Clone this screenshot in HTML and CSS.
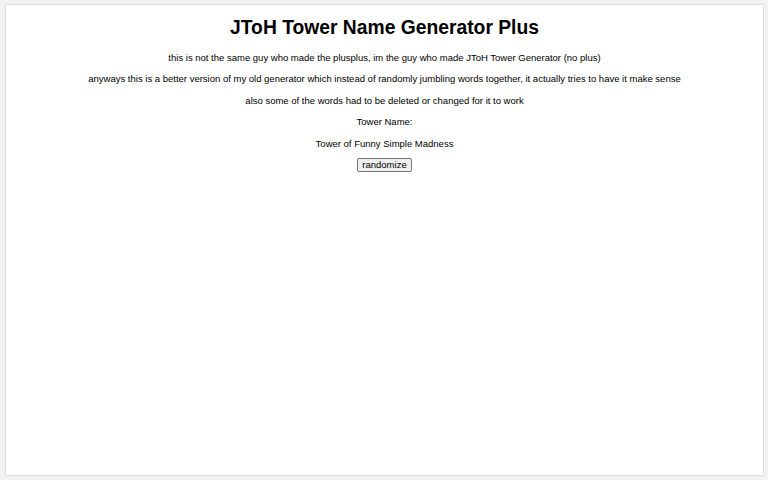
FILE: index.html
```html
<!DOCTYPE html>
<html lang="en">
<head>
    <meta charset="UTF-8">
    <meta name="viewport" content="width=device-width, initial-scale=1.0">
    <title>JToH Tower Name Generator Plus</title>
    <link rel="stylesheet" href="styles.css">
</head>
<body>
    <div class="page">
        <h1>JToH Tower Name Generator Plus</h1>
        <p>this is not the same guy who made the plusplus, im the guy who made JToH Tower Generator (no plus)</p>
        <p>anyways this is a better version of my old generator which instead of randomly jumbling words together, it actually tries to have it make sense</p>
        <p>also some of the words had to be deleted or changed for it to work</p>
        <p>Tower Name:</p>
        <p class="result">Tower of Funny Simple Madness</p>
        <button class="randomize">randomize</button>
    </div>
</body>
</html>
```

FILE: styles.css
```css
* {
    box-sizing: border-box;
}

body {
    margin: 0;
    padding: 4px 4px 4px 5px;
    background: #f2f2f2;
    font-family: "Liberation Sans", Arial, sans-serif;
    color: #000;
}

.page {
    height: 472px;
    background: #fff;
    border: 1px solid #ddd;
    text-align: center;
    padding-top: 12px;
}

h1 {
    margin: 0 0 12.5px;
    font-size: 19.3px;
    line-height: 22px;
}

p {
    margin: 0 0 10.5px;
    font-size: 9.5px;
    line-height: 11px;
}

.randomize {
    display: block;
    margin: -1px auto 0;
    font-family: "Liberation Sans", Arial, sans-serif;
    font-size: 9.5px;
    line-height: 12px;
    padding: 0 4px;
    color: #000;
    background: #efefef;
    border: 1px solid #767676;
    border-radius: 2px;
}
```
